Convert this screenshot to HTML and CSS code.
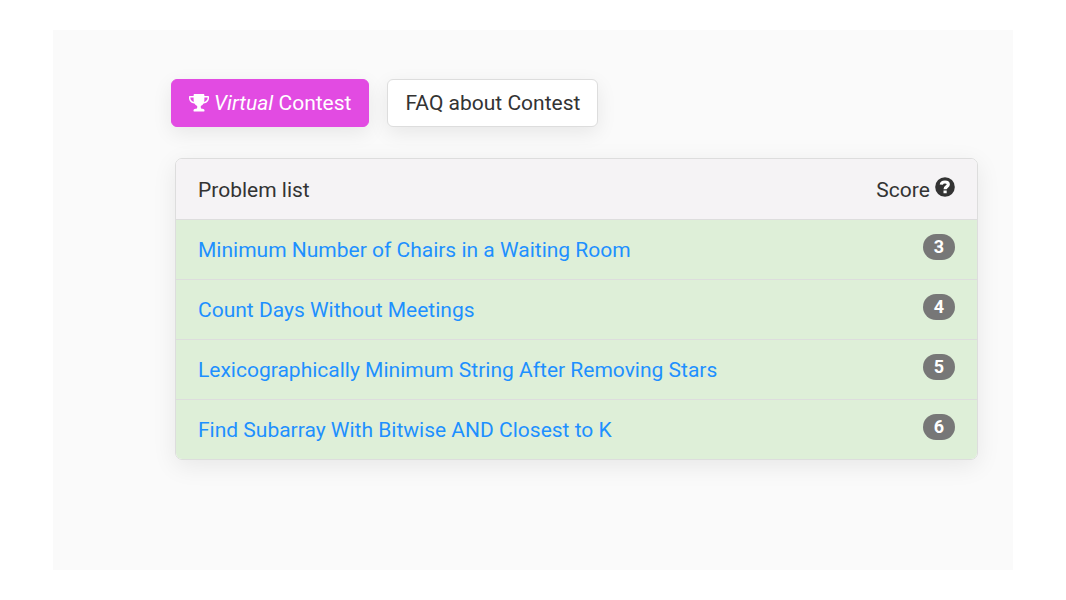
FILE: index.html
```html
<!DOCTYPE html>
<html lang="en">
<head>
    <meta charset="UTF-8">
    <title>Contest</title>
    <link rel="stylesheet" href="styles.css">
</head>
<body>
    <main class="contest">
        <div class="actions">
            <button type="button" class="btn btn-virtual">
                <svg class="trophy" viewBox="0 0 20 18" aria-hidden="true">
                    <path fill="currentColor" d="M4.600 1.200C4.600.5 5 0 5.700 0h8.600c.7 0 1.100.5 1.100 1.200V2H19c.6 0 1 .4 1 1v1c0 3-2.300 5.200-5.400 5.500-.7 1.200-1.700 2-2.800 2.400v1.600c0 .8.6 1.300 1.600 1.300 1.200 0 2.100.7 2.100 1.700V17c0 .3-.2.500-.5.500H5c-.3 0-.5-.2-.5-.5v-.5c0-1 .9-1.700 2.100-1.700 1 0 1.600-.5 1.600-1.300v-1.600c-1.100-.4-2.100-1.200-2.800-2.400C2.300 9.200 0 7 0 4V3c0-.6.4-1 1-1h3.600zM4.600 3.400H1.400V4c0 1.700 1.200 3.300 3.400 3.900-.2-1.400-.2-2.900-.2-4.500zm10.800 0c0 1.600 0 3.100-.2 4.500 2.200-.6 3.400-2.200 3.400-3.900v-.6z"/>
                </svg>
                <span><em>Virtual</em> Contest</span>
            </button>
            <button type="button" class="btn">FAQ about Contest</button>
        </div>

        <div class="problems">
            <table>
                <thead>
                    <tr>
                        <th scope="col">Problem list</th>
                        <th scope="col" class="score">Score
                            <svg class="help" viewBox="0 0 20 20" role="img" aria-label="Help">
                                <circle cx="10" cy="10" r="9.800" fill="currentColor"/>
                                <path fill="none" stroke="#fff" stroke-width="3.200" d="M6.300 7.700C6.500 5.800 7.800 5 10 5s3.300 1 3.300 2.500c0 2.200-3.200 2.100-3.200 4.700"/>
                                <path fill="#fff" d="M8.500 13.400h3.200v2.800H8.500z"/>
                            </svg>
                        </th>
                    </tr>
                </thead>
                <tbody>
                    <tr>
                        <td><a href="#">Minimum Number of Chairs in a Waiting Room</a></td>
                        <td class="score"><span class="badge">3</span></td>
                    </tr>
                    <tr>
                        <td><a href="#">Count Days Without Meetings</a></td>
                        <td class="score"><span class="badge">4</span></td>
                    </tr>
                    <tr>
                        <td><a href="#">Lexicographically Minimum String After Removing Stars</a></td>
                        <td class="score"><span class="badge">5</span></td>
                    </tr>
                    <tr>
                        <td><a href="#">Find Subarray With Bitwise AND Closest to K</a></td>
                        <td class="score"><span class="badge">6</span></td>
                    </tr>
                </tbody>
            </table>
        </div>
    </main>
</body>
</html>
```
FILE: styles.css
```css
* {
    box-sizing: border-box;
}
body {
    margin: 0;
    min-height: 100vh;
    padding: 30px 53px;
    display: flex;
    font-family: Roboto, "Liberation Sans", sans-serif;
    font-size: 21px;
    line-height: 28px;
    color: #333;
    background: #fff;
}
.contest {
    flex: 1;
    padding: 49px 35px 49px 118px;
    background: #fafafa;
    overflow: hidden;
}
.actions {
    display: flex;
    gap: 18px;
    margin-bottom: 31px;
}
.btn {
    display: flex;
    align-items: center;
    gap: 5px;
    height: 48px;
    padding: 0 17px;
    border: 1px solid #ddd;
    border-radius: 6px;
    background: #fff;
    color: #333;
    font: inherit;
    white-space: nowrap;
    cursor: pointer;
    box-shadow: 0 6px 20px rgba(0, 0, 0, 0.08);
}
.btn-virtual {
    border-color: #e24be2;
    background: #e24be2;
    color: #fff;
}
.trophy {
    width: 20px;
    height: 18px;
}
.problems {
    margin-left: 4px;
    border: 1px solid #ddd;
    border-radius: 7px;
    overflow: hidden;
    box-shadow: 0 6px 24px rgba(0, 0, 0, 0.08);
}
table {
    width: 100%;
    border-collapse: separate;
    border-spacing: 0;
}
th,
td {
    height: 60px;
    padding: 16px 22px 15px;
    font-weight: normal;
    text-align: left;
    vertical-align: top;
}
th {
    padding-top: 17px;
    background: #f5f3f5;
}
td {
    border-top: 1px solid #ddd;
    background: #deefd8;
}
.score {
    text-align: right;
    white-space: nowrap;
}
.help {
    width: 20px;
    height: 20px;
}
a {
    color: #1e90ff;
    text-decoration: none;
}
a:hover {
    text-decoration: underline;
}
.badge {
    display: block;
    width: 32px;
    margin: -2px 0 0 auto;
    border-radius: 13px;
    background: #777;
    color: #fff;
    font-size: 18px;
    font-weight: bold;
    line-height: 26px;
    text-align: center;
}
```
